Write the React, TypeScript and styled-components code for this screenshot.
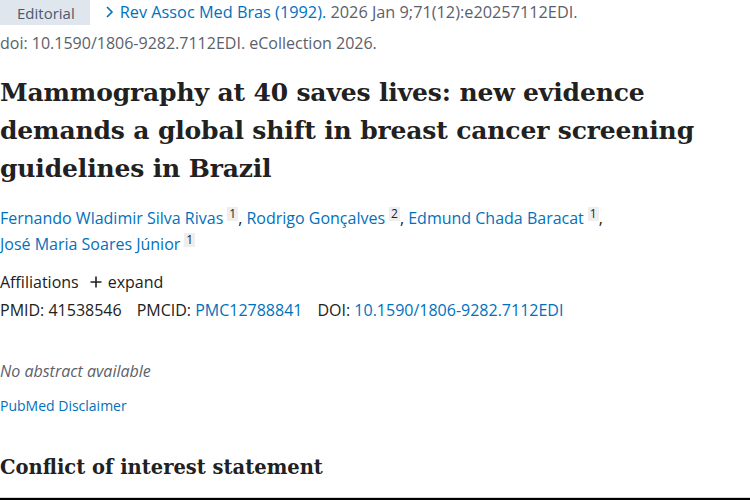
import React from "react";
import styled, { createGlobalStyle } from "styled-components";

const Global = createGlobalStyle`
  html, body { margin: 0; padding: 0; background: #fff; }
  body { font-family: "Open Sans", "Noto Sans", sans-serif; color: #212121; }
`;

const Page = styled.div`
  width: 750px;
  height: 500px;
  overflow: hidden;
  display: flex;
  flex-direction: column;
  position: relative;
  box-sizing: border-box;
`;

const Content = styled.div`
  flex: 1;
  display: flex;
  flex-direction: column;
  font-size: 16px;
`;

const CiteRow = styled.div`
  display: flex;
  align-items: center;
  height: 25px;
  gap: 15px;
  font-size: 16.3px;
`;

const Badge = styled.span`
  display: inline-flex;
  align-items: center;
  height: 25px;
  padding: 0 15px 0 17px;
  background: #dfe6ee;
  color: #4a5a6e;
  font-size: 15px;
`;

const Journal = styled.span`
  color: #0071bc;
`;

const Muted = styled.span`
  color: #5b616b;
`;

const ChevronWrap = styled.span`
  display: inline-block;
  margin-right: 6px;
  vertical-align: -1px;
`;

const DoiLine = styled.div`
  color: #5b616b;
  margin-top: 7px;
  line-height: 22px;
`;

const Title = styled.h1`
  margin: 20px 0 0;
  font-family: "DejaVu Serif", serif;
  font-weight: 700;
  font-size: 25px;
  line-height: 38px;
  color: #212121;
  letter-spacing: -0.15px;
`;

const Authors = styled.div`
  margin-top: 17px;
  line-height: 26px;
`;

const AuthorLink = styled.a`
  color: #0071bc;
  text-decoration: none;
`;

const Sup = styled.sup`
  display: inline-block;
  font-size: 12px;
  line-height: 14px;
  padding: 0 2px;
  margin-left: 4px;
  background: #eeeeee;
  color: #212121;
  vertical-align: 6px;
`;

const Comma = styled.span`
  color: #212121;
`;

const Affil = styled.div`
  margin-top: 13px;
  line-height: 24px;
  display: flex;
  align-items: center;
  gap: 11px;
`;

const Expand = styled.span`
  display: inline-flex;
  align-items: center;
  gap: 6px;
`;

const Ids = styled.div`
  line-height: 24px;
  margin-top: 4px;
  display: flex;
  gap: 15px;
`;

const IdItem = styled.span``;

const Link = styled.a`
  color: #0071bc;
  text-decoration: none;
`;

const NoAbstract = styled.div`
  margin-top: 37px;
  font-style: italic;
  color: #5b616b;
  line-height: 24px;
`;

const Disclaimer = styled.a`
  margin-top: 13px;
  font-size: 14px;
  line-height: 20px;
  color: #0071bc;
  text-decoration: none;
`;

const SectionTitle = styled.h2`
  margin: 38px 0 0;
  font-family: "DejaVu Serif", serif;
  font-weight: 700;
  font-size: 19.5px;
  line-height: 28px;
  color: #212121;
`;

const BottomEdge = styled.div`
  position: absolute;
  left: 0;
  right: 0;
  bottom: 0;
  height: 3px;
  border-top: 1px solid #d6d6d6;
  background: #000;
  box-sizing: border-box;
`;

const Chevron = () => (
  <svg width="9" height="14" viewBox="0 0 9 14" fill="none">
    <path d="M2 2 L7 7 L2 12" stroke="#0071bc" strokeWidth="1.6" />
  </svg>
);

const Plus = () => (
  <svg width="12" height="12" viewBox="0 0 12 12">
    <path d="M6 0.5 V11.5 M0.5 6 H11.5" stroke="#212121" strokeWidth="1.6" />
  </svg>
);

export default function App() {
  return (
    <Page>
      <Global />
      <Content>
        <CiteRow>
          <Badge>Editorial</Badge>
          <span>
            <Journal>
              <ChevronWrap>
                <Chevron />
              </ChevronWrap>
              Rev Assoc Med Bras (1992).
            </Journal>{" "}
            <Muted>2026 Jan 9;71(12):e20257112EDI.</Muted>
          </span>
        </CiteRow>
        <DoiLine>doi: 10.1590/1806-9282.7112EDI. eCollection 2026.</DoiLine>
        <Title>
          Mammography at 40 saves lives: new evidence demands a global shift in
          breast cancer screening guidelines in Brazil
        </Title>
        <Authors>
          <AuthorLink>Fernando Wladimir Silva Rivas</AuthorLink>
          <Sup>1</Sup>
          <Comma>, </Comma>
          <AuthorLink>Rodrigo Gonçalves</AuthorLink>
          <Sup>2</Sup>
          <Comma>, </Comma>
          <AuthorLink>Edmund Chada Baracat</AuthorLink>
          <Sup>1</Sup>
          <Comma>,</Comma>
          <br />
          <AuthorLink>José Maria Soares Júnior</AuthorLink>
          <Sup>1</Sup>
        </Authors>
        <Affil>
          <span>Affiliations</span>
          <Expand>
            <Plus />
            expand
          </Expand>
        </Affil>
        <Ids>
          <IdItem>PMID: 41538546</IdItem>
          <IdItem>
            PMCID: <Link>PMC12788841</Link>
          </IdItem>
          <IdItem>
            DOI: <Link>10.1590/1806-9282.7112EDI</Link>
          </IdItem>
        </Ids>
        <NoAbstract>No abstract available</NoAbstract>
        <Disclaimer>PubMed Disclaimer</Disclaimer>
        <SectionTitle>Conflict of interest statement</SectionTitle>
      </Content>
      <BottomEdge />
    </Page>
  );
}
